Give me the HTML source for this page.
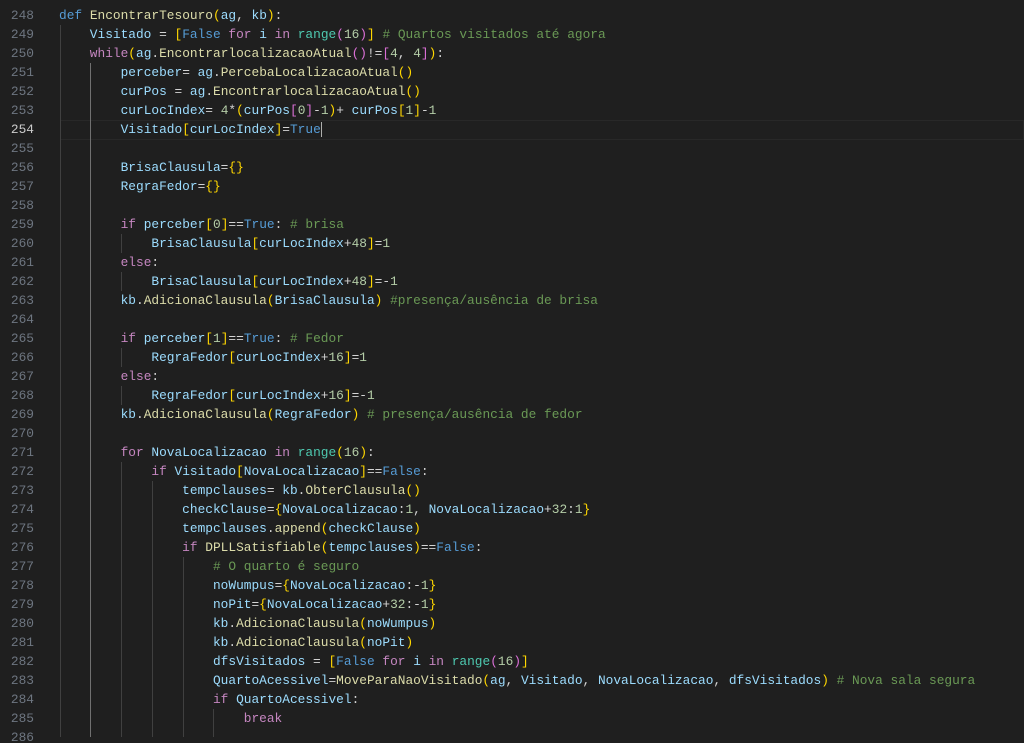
<!DOCTYPE html>
<html><head><meta charset="utf-8"><style>
html,body{margin:0;padding:0;background:#1f1f1f;width:1024px;height:743px;overflow:hidden}
#ed{position:relative;width:1024px;height:743px;font-family:"Liberation Mono",monospace;font-size:12.83px;color:#d4d4d4}
.ln{position:absolute;left:0;width:34px;text-align:right;color:#6e7681;line-height:19px;height:19px}
.ln.a{color:#cccccc}
.cd{position:absolute;left:59px;white-space:pre;line-height:19px;height:19px}
.g{position:absolute;width:1px;background:#404040}
.k{color:#569cd6}.c{color:#c586c0}.v{color:#9cdcfe}.f{color:#dcdcaa}.n{color:#b5cea8}.m{color:#6a9955}.y{color:#ffd700}.p{color:#da70d6}.t{color:#4ec9b0}
#cur{position:absolute;left:60px;right:0;top:120px;height:18px;border:1px solid #282828}
</style></head><body><div id="ed">
<div id="cur"></div>
<div class="g" style="left:60px;top:25px;height:712px"></div>
<div class="g" style="left:90px;top:63px;height:674px;background:#707070"></div>
<div class="g" style="left:121px;top:462px;height:275px"></div>
<div class="g" style="left:152px;top:481px;height:256px"></div>
<div class="g" style="left:183px;top:557px;height:180px"></div>
<div class="g" style="left:213px;top:709px;height:28px"></div>
<div class="g" style="left:121px;top:234px;height:19px"></div>
<div class="g" style="left:121px;top:272px;height:19px"></div>
<div class="g" style="left:121px;top:348px;height:19px"></div>
<div class="g" style="left:121px;top:386px;height:19px"></div>
<div id="lines"></div>
</div>
<script>
const L=[
[247,''],
[248,'<span class=k>def</span> <span class=f>EncontrarTesouro</span><span class=y>(</span><span class=v>ag</span>, <span class=v>kb</span><span class=y>)</span>:'],
[249,'    <span class=v>Visitado</span> = <span class=y>[</span><span class=k>False</span> <span class=c>for</span> <span class=v>i</span> <span class=c>in</span> <span class=t>range</span><span class=p>(</span><span class=n>16</span><span class=p>)</span><span class=y>]</span> <span class=m># Quartos visitados até agora</span>'],
[250,'    <span class=c>while</span><span class=y>(</span><span class=v>ag</span>.<span class=f>EncontrarlocalizacaoAtual</span><span class=p>()</span>!=<span class=p>[</span><span class=n>4</span>, <span class=n>4</span><span class=p>]</span><span class=y>)</span>:'],
[251,'        <span class=v>perceber</span>= <span class=v>ag</span>.<span class=f>PercebaLocalizacaoAtual</span><span class=y>()</span>'],
[252,'        <span class=v>curPos</span> = <span class=v>ag</span>.<span class=f>EncontrarlocalizacaoAtual</span><span class=y>()</span>'],
[253,'        <span class=v>curLocIndex</span>= <span class=n>4</span>*<span class=y>(</span><span class=v>curPos</span><span class=p>[</span><span class=n>0</span><span class=p>]</span>-<span class=n>1</span><span class=y>)</span>+ <span class=v>curPos</span><span class=y>[</span><span class=n>1</span><span class=y>]</span>-<span class=n>1</span>'],
[254,'        <span class=v>Visitado</span><span class=y>[</span><span class=v>curLocIndex</span><span class=y>]</span>=<span class=k>True</span><span style="border-left:1px solid #aeafad;margin-left:0"></span>'],
[255,''],
[256,'        <span class=v>BrisaClausula</span>=<span class=y>{}</span>'],
[257,'        <span class=v>RegraFedor</span>=<span class=y>{}</span>'],
[258,''],
[259,'        <span class=c>if</span> <span class=v>perceber</span><span class=y>[</span><span class=n>0</span><span class=y>]</span>==<span class=k>True</span>: <span class=m># brisa</span>'],
[260,'            <span class=v>BrisaClausula</span><span class=y>[</span><span class=v>curLocIndex</span>+<span class=n>48</span><span class=y>]</span>=<span class=n>1</span>'],
[261,'        <span class=c>else</span>:'],
[262,'            <span class=v>BrisaClausula</span><span class=y>[</span><span class=v>curLocIndex</span>+<span class=n>48</span><span class=y>]</span>=-<span class=n>1</span>'],
[263,'        <span class=v>kb</span>.<span class=f>AdicionaClausula</span><span class=y>(</span><span class=v>BrisaClausula</span><span class=y>)</span> <span class=m>#presença/ausência de brisa</span>'],
[264,''],
[265,'        <span class=c>if</span> <span class=v>perceber</span><span class=y>[</span><span class=n>1</span><span class=y>]</span>==<span class=k>True</span>: <span class=m># Fedor</span>'],
[266,'            <span class=v>RegraFedor</span><span class=y>[</span><span class=v>curLocIndex</span>+<span class=n>16</span><span class=y>]</span>=<span class=n>1</span>'],
[267,'        <span class=c>else</span>:'],
[268,'            <span class=v>RegraFedor</span><span class=y>[</span><span class=v>curLocIndex</span>+<span class=n>16</span><span class=y>]</span>=-<span class=n>1</span>'],
[269,'        <span class=v>kb</span>.<span class=f>AdicionaClausula</span><span class=y>(</span><span class=v>RegraFedor</span><span class=y>)</span> <span class=m># presença/ausência de fedor</span>'],
[270,''],
[271,'        <span class=c>for</span> <span class=v>NovaLocalizacao</span> <span class=c>in</span> <span class=t>range</span><span class=y>(</span><span class=n>16</span><span class=y>)</span>:'],
[272,'            <span class=c>if</span> <span class=v>Visitado</span><span class=y>[</span><span class=v>NovaLocalizacao</span><span class=y>]</span>==<span class=k>False</span>:'],
[273,'                <span class=v>tempclauses</span>= <span class=v>kb</span>.<span class=f>ObterClausula</span><span class=y>()</span>'],
[274,'                <span class=v>checkClause</span>=<span class=y>{</span><span class=v>NovaLocalizacao</span>:<span class=n>1</span>, <span class=v>NovaLocalizacao</span>+<span class=n>32</span>:<span class=n>1</span><span class=y>}</span>'],
[275,'                <span class=v>tempclauses</span>.<span class=f>append</span><span class=y>(</span><span class=v>checkClause</span><span class=y>)</span>'],
[276,'                <span class=c>if</span> <span class=f>DPLLSatisfiable</span><span class=y>(</span><span class=v>tempclauses</span><span class=y>)</span>==<span class=k>False</span>:'],
[277,'                    <span class=m># O quarto é seguro</span>'],
[278,'                    <span class=v>noWumpus</span>=<span class=y>{</span><span class=v>NovaLocalizacao</span>:-<span class=n>1</span><span class=y>}</span>'],
[279,'                    <span class=v>noPit</span>=<span class=y>{</span><span class=v>NovaLocalizacao</span>+<span class=n>32</span>:-<span class=n>1</span><span class=y>}</span>'],
[280,'                    <span class=v>kb</span>.<span class=f>AdicionaClausula</span><span class=y>(</span><span class=v>noWumpus</span><span class=y>)</span>'],
[281,'                    <span class=v>kb</span>.<span class=f>AdicionaClausula</span><span class=y>(</span><span class=v>noPit</span><span class=y>)</span>'],
[282,'                    <span class=v>dfsVisitados</span> = <span class=y>[</span><span class=k>False</span> <span class=c>for</span> <span class=v>i</span> <span class=c>in</span> <span class=t>range</span><span class=p>(</span><span class=n>16</span><span class=p>)</span><span class=y>]</span>'],
[283,'                    <span class=v>QuartoAcessivel</span>=<span class=f>MoveParaNaoVisitado</span><span class=y>(</span><span class=v>ag</span>, <span class=v>Visitado</span>, <span class=v>NovaLocalizacao</span>, <span class=v>dfsVisitados</span><span class=y>)</span> <span class=m># Nova sala segura</span>'],
[284,'                    <span class=c>if</span> <span class=v>QuartoAcessivel</span>:'],
[285,'                        <span class=c>break</span>'],
[286,'']
];
let h='';
for(const [n,c] of L){const top=6+(n-248)*19;
h+=`<div class="ln${n==254?' a':''}" style="top:${top}px">${n}</div><div class="cd" style="top:${top}px">${c}</div>`;}
document.getElementById('lines').innerHTML=h;
</script>
</body></html>
